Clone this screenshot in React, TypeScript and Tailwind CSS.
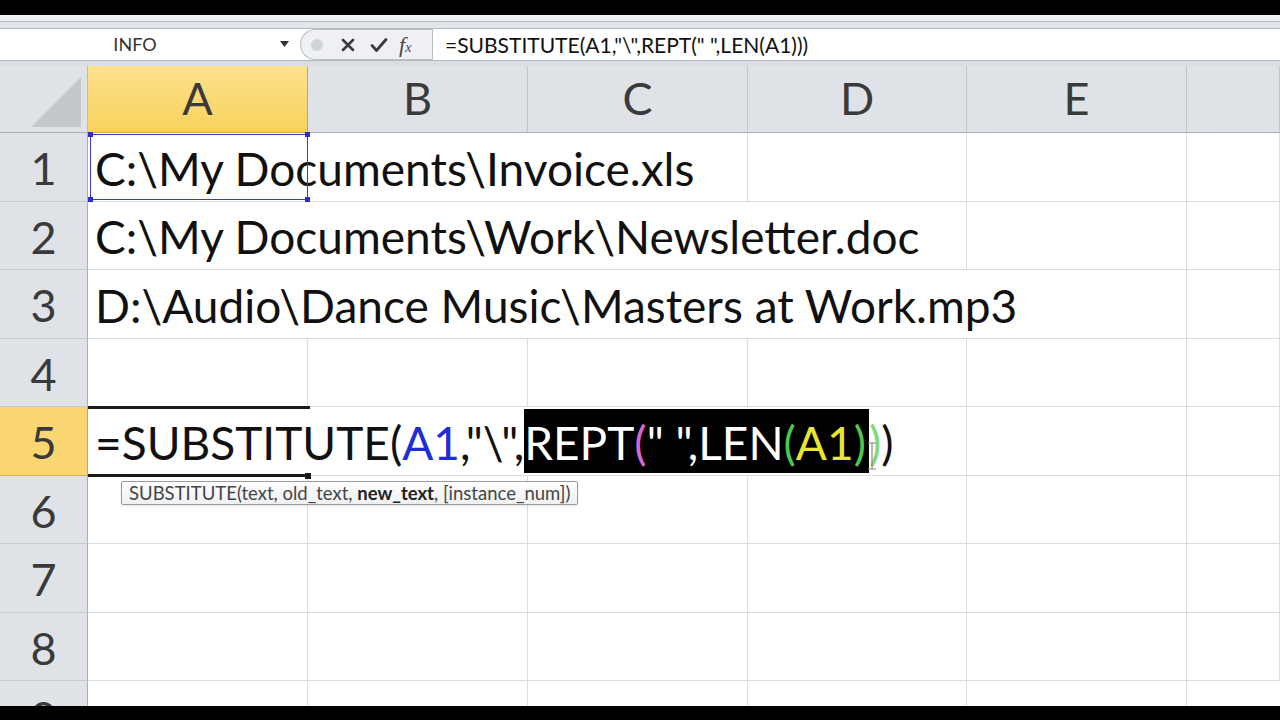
import React from 'react';

const font = { fontFamily: 'Lato, "Open Sans", sans-serif' };

function HeaderCell({ label, className }: { label: string; className: string }) {
  return (
    <div
      className={`flex items-center justify-center border-r border-b border-r-[#c3c7cd] border-b-[#a9aeb5] bg-[#dfe2e7] text-[45px] text-[#3a3a3a] ${className}`}
    >
      {label}
    </div>
  );
}

function RowLabel({ n, active }: { n: string; active?: boolean }) {
  return (
    <div
      className={`flex w-[88px] shrink-0 items-center justify-center border-r border-b text-[45px] text-[#3a3a3a] ${
        active
          ? 'border-r-[#d8a53c] border-b-[#e0b04a] bg-[#f9d672]'
          : 'border-r-[#a9aeb5] border-b-[#c6cacf] bg-[#dfe2e7]'
      }`}
    >
      <span className="pt-[4px]">{n}</span>
    </div>
  );
}

function Cell({ className = 'w-[220px]', children }: { className?: string; children?: React.ReactNode }) {
  return (
    <div className={`relative flex shrink-0 items-center border-r border-b border-[#d9dce0] ${className}`}>
      {children}
    </div>
  );
}

function EmptyCells({ from }: { from: number }) {
  const cls = ['w-[220px]', 'w-[220px]', 'w-[220px]', 'w-[219px]', 'w-[220px]', 'flex-1'];
  return (
    <>
      {cls.slice(from).map((c, i) => (
        <Cell key={i} className={c} />
      ))}
    </>
  );
}

function CellText({ children }: { children: React.ReactNode }) {
  return <span className="whitespace-nowrap pl-[7px] pt-[4px] text-[46px] leading-none text-[#111]">{children}</span>;
}

function Handle({ className }: { className: string }) {
  return <span className={`absolute h-[5px] w-[5px] bg-[#2a2ad6] ${className}`} />;
}

export default function App() {
  return (
    <div className="flex h-[720px] w-[1280px] flex-col overflow-hidden bg-black" style={font}>
      {/* letterbox + ribbon edge */}
      <div className="h-[15px] shrink-0 bg-black" />
      <div className="h-[7px] shrink-0 border-b border-[#b7bcc3] bg-[#eef0f3]" />
      <div className="h-[6px] shrink-0 bg-[#e2e5e9]" />

      {/* formula bar */}
      <div className="flex h-[33px] shrink-0 border-y border-[#b4b9c0] bg-white">
        <div className="relative flex w-[300px] shrink-0 items-center bg-white">
          <span className="w-[270px] text-center text-[18px] text-[#333]">INFO</span>
          <svg className="absolute left-[280px] top-[12px]" width="9" height="6" viewBox="0 0 9 6">
            <path d="M0 0h9L4.5 6z" fill="#333" />
          </svg>
        </div>
        <div className="flex w-[132px] shrink-0 items-center rounded-l-[16px] border border-r-0 border-[#b9bec5] bg-[#eef0f3]">
          <span className="ml-[10px] h-[12px] w-[12px] rounded-full bg-[#cfd3d8]" />
          <svg className="ml-[17px]" width="16" height="16" viewBox="0 0 16 16">
            <path d="M3 3l10 10M13 3L3 13" stroke="#3b3b3b" strokeWidth="2.6" strokeLinecap="round" />
          </svg>
          <svg className="ml-[14px]" width="18" height="16" viewBox="0 0 18 16">
            <path d="M2 8.5l4.5 5L16 2.5" stroke="#3b3b3b" strokeWidth="2.8" fill="none" strokeLinecap="round" strokeLinejoin="round" />
          </svg>
          <span className="ml-[11px] font-['Liberation_Serif',serif] text-[22px] italic leading-none text-[#444]">
            f<span className="text-[14px]">x</span>
          </span>
        </div>
        <div className="flex flex-1 items-center border-l border-[#b9bec5] pl-[12px] text-[21px] text-[#111]">
          =SUBSTITUTE(A1,"\",REPT(" ",LEN(A1)))
        </div>
      </div>
      <div className="h-[5px] shrink-0 bg-[#dadde2]" />

      {/* grid */}
      <div className="flex flex-1 flex-col bg-white">
        {/* column headers */}
        <div className="flex h-[67px] shrink-0">
          <div className="relative w-[88px] shrink-0 border-r border-b border-r-[#b9bec4] border-b-[#a9aeb5] bg-[#dfe2e7]">
            <svg className="absolute bottom-[5px] right-[6px]" width="50" height="50" viewBox="0 0 50 50">
              <path d="M50 0V50H0z" fill="#c4c7cb" />
            </svg>
          </div>
          <div className="flex w-[220px] shrink-0 items-center justify-center border-r border-b border-r-[#d8a53c] border-b-[#d9a640] bg-gradient-to-b from-[#fde28e] to-[#f8d25a] text-[45px] text-[#3a3a3a]">
            A
          </div>
          <HeaderCell label="B" className="w-[220px] shrink-0" />
          <HeaderCell label="C" className="w-[220px] shrink-0" />
          <HeaderCell label="D" className="w-[219px] shrink-0" />
          <HeaderCell label="E" className="w-[220px] shrink-0" />
          <HeaderCell label="" className="flex-1" />
        </div>

        {/* row 1 */}
        <div className="flex h-[68.5px] shrink-0">
          <RowLabel n="1" />
          <Cell className="w-[660px]">
            <CellText>C:\My Documents\Invoice.xls</CellText>
            <div className="absolute left-[2px] top-[1px] h-[66px] w-[218px] border border-[#3b3bd0]">
              <Handle className="-left-[3px] -top-[3px]" />
              <Handle className="-right-[3px] -top-[3px]" />
              <Handle className="-bottom-[3px] -left-[3px]" />
              <Handle className="-bottom-[3px] -right-[3px]" />
            </div>
          </Cell>
          <EmptyCells from={3} />
        </div>

        {/* row 2 */}
        <div className="flex h-[68.5px] shrink-0">
          <RowLabel n="2" />
          <Cell className="w-[879px]">
            <CellText>C:\My Documents\Work\Newsletter.doc</CellText>
          </Cell>
          <EmptyCells from={4} />
        </div>

        {/* row 3 */}
        <div className="flex h-[68.5px] shrink-0">
          <RowLabel n="3" />
          <Cell className="w-[1099px]">
            <CellText>D:\Audio\Dance Music\Masters at Work.mp3</CellText>
          </Cell>
          <EmptyCells from={5} />
        </div>

        {/* row 4 */}
        <div className="flex h-[68.5px] shrink-0">
          <RowLabel n="4" />
          <EmptyCells from={0} />
        </div>

        {/* row 5 - editing */}
        <div className="relative z-10 flex h-[68.5px] shrink-0">
          <RowLabel n="5" active />
          <Cell className="w-[879px]">
            <span className="flex items-center whitespace-nowrap pl-[7px] text-[46px] leading-none text-[#111]">
              <span className="pt-[4px]">
                =SUBSTITUTE(<span className="text-[#1f2bd4]">A1</span>,"\",
              </span>
              <span className="flex h-[64px] items-center bg-black pt-[4px] pr-[3px] text-white">
                REPT<span className="text-[#d966d6]">(</span>" ",LEN<span className="text-[#4cc84a]">(</span>
                <span className="text-[#e6e633]">A1</span>
                <span className="text-[#4cc84a]">)</span>
              </span>
              <span className="relative pt-[4px]">
                <span className="text-[#7fd87a]">)</span>
                <svg className="absolute left-[-2px] top-[26px]" width="10" height="28" viewBox="0 0 10 28">
                  <path d="M1 1h8M5 1v26M1 27h8" stroke="#888" strokeWidth="1.2" fill="none" />
                </svg>
                )
              </span>
            </span>
            <span className="absolute -top-[1px] left-0 h-[3px] w-[222px] bg-[#1a1a1a]" />
            <span className="absolute -bottom-[2px] left-0 h-[3px] w-[222px] bg-[#1a1a1a]" />
            <span className="absolute -bottom-[4px] left-[217px] h-[6px] w-[6px] bg-[#1a1a1a]" />
            {/* function tooltip */}
            <div className="absolute left-[33px] top-[74px] whitespace-nowrap rounded-[2px] border border-[#9b9b9b] bg-gradient-to-b from-white to-[#eef0f2] px-[7px] text-[18.5px] leading-[22px] text-[#444] shadow-sm">
              SUBSTITUTE(text, old_text, <span className="font-bold text-[#222]">new_text</span>, [instance_num])
            </div>
          </Cell>
          <EmptyCells from={4} />
        </div>

        {['6', '7', '8'].map((n) => (
          <div key={n} className="flex h-[68.5px] shrink-0">
            <RowLabel n={n} />
            <EmptyCells from={0} />
          </div>
        ))}

        {/* row 9 partial */}
        <div className="flex h-[25px] shrink-0 overflow-hidden">
          <div className="flex w-[88px] shrink-0 justify-center border-r border-[#a9aeb5] bg-[#dfe2e7] pt-[14px] text-[45px] leading-none text-[#3a3a3a]">
            9
          </div>
          <div className="w-[220px] shrink-0 border-r border-[#d9dce0]" />
          <div className="w-[220px] shrink-0 border-r border-[#d9dce0]" />
          <div className="w-[220px] shrink-0 border-r border-[#d9dce0]" />
          <div className="w-[219px] shrink-0 border-r border-[#d9dce0]" />
          <div className="w-[220px] shrink-0 border-r border-[#d9dce0]" />
          <div className="flex-1" />
        </div>
      </div>
      <div className="h-[14px] shrink-0 bg-black" />
    </div>
  );
}
